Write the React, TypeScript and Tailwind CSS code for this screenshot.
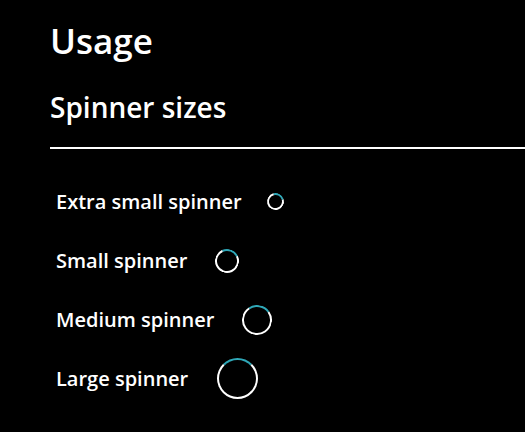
import React from 'react';

type Size = { label: string; box: string; turn: string; gap: string };

const sizes: Size[] = [
  { label: 'Extra small spinner', box: 'w-[17px] h-[17px]', turn: 'rotate-[30deg]', gap: 'gap-[25px]' },
  { label: 'Small spinner', box: 'w-[24px] h-[24px]', turn: 'rotate-[20deg]', gap: 'gap-[28px]' },
  { label: 'Medium spinner', box: 'w-[30px] h-[30px]', turn: 'rotate-[10deg]', gap: 'gap-[28px]' },
  { label: 'Large spinner', box: 'w-[41px] h-[41px]', turn: 'rotate-[0deg]', gap: 'gap-[29px]' },
];

const Spinner: React.FC<{ box: string; turn: string }> = ({ box, turn }) => (
  <div className={`${box} ${turn} shrink-0 rounded-full border-2 border-white border-t-[#2fa8b8]`} />
);

export default function App() {
  return (
    <div
      className="w-[525px] h-[432px] overflow-hidden bg-black text-white font-semibold"
      style={{ fontFamily: '"Open Sans", "Noto Sans", sans-serif' }}
    >
      <div className="pl-[50px]">
        <h1 className="pt-[23px] text-[35px] leading-none font-semibold">Usage</h1>
        <h2 className="mt-[35px] pb-[26px] text-[28px] leading-none font-semibold border-b-2 border-white">
          Spinner sizes
        </h2>

        <div className="mt-[23px] ml-[6px] flex flex-col">
          {sizes.map((s) => (
            <div key={s.label} className={`h-[59px] flex items-center ${s.gap}`}>
              <span className="text-[20px] leading-none">{s.label}</span>
              <Spinner box={s.box} turn={s.turn} />
            </div>
          ))}
        </div>
      </div>
    </div>
  );
}
